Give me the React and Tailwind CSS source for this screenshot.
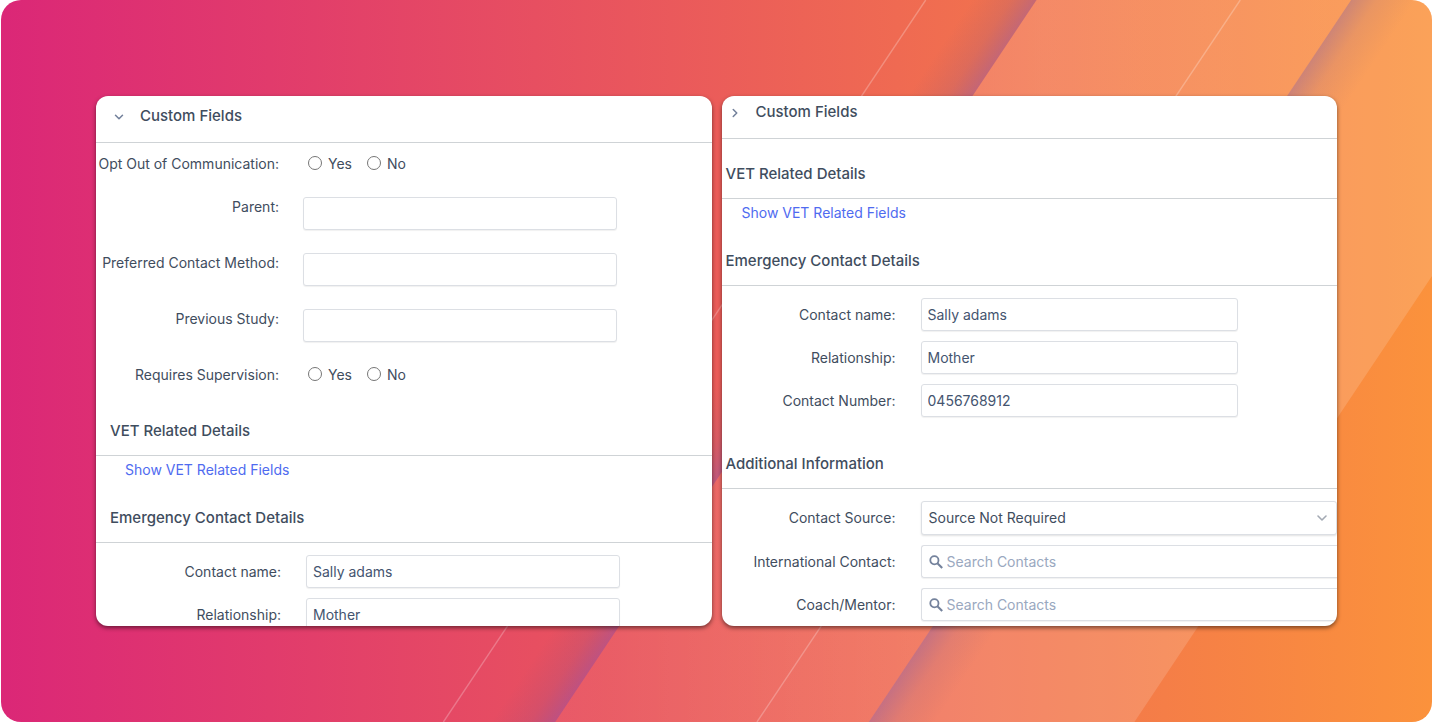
import { ChevronDown, ChevronRight } from "lucide-react";

function Backdrop() {
  return (
    <svg
      className="absolute inset-0 w-full h-full"
      viewBox="0 0 1433 722"
      preserveAspectRatio="none"
      aria-hidden="true"
    >
      <defs>
        <linearGradient id="band" gradientUnits="userSpaceOnUse" x1="600" y1="0" x2="1040" y2="0">
          <stop offset="0" stopColor="#fff" stopOpacity="0.05" />
          <stop offset="1" stopColor="#fff" stopOpacity="0.15" />
        </linearGradient>
        <linearGradient id="shadeLeft" gradientUnits="userSpaceOnUse" x1="1037" y1="0" x2="992" y2="-30">
          <stop offset="0" stopColor="#6750c8" stopOpacity="0.33" />
          <stop offset="0.4" stopColor="#6750a0" stopOpacity="0.14" />
          <stop offset="1" stopColor="#675080" stopOpacity="0" />
        </linearGradient>
        <linearGradient id="shadeRight" gradientUnits="userSpaceOnUse" x1="1352" y1="0" x2="1397" y2="30">
          <stop offset="0" stopColor="#6750b4" stopOpacity="0.3" />
          <stop offset="0.4" stopColor="#6750a0" stopOpacity="0.11" />
          <stop offset="1" stopColor="#675080" stopOpacity="0" />
        </linearGradient>
      </defs>
      <polygon points="1352,0 1433,0 1433,276 1135,722 869,722" fill="#fff" fillOpacity="0.15" />
      <polygon points="1352,0 1433,0 936,722 869,722" fill="url(#shadeRight)" />
      <polygon points="1037,0 965,0 482,722 555,722" fill="url(#shadeLeft)" />
      <polygon points="1037,0 1352,0 869,722 555,722" fill="url(#band)" />
      <g stroke="#fff" strokeOpacity="0.25" strokeWidth="1.4">
        <line x1="926" y1="0" x2="443" y2="722" />
        <line x1="1241" y1="0" x2="757" y2="722" />
      </g>
    </svg>
  );
}

function Card({ children }) {
  return (
    <section className="flex-1 min-w-0 overflow-hidden rounded-xl bg-white shadow-[0_2px_4px_rgba(0,0,0,0.5)]">
      {children}
    </section>
  );
}

function SectionTitle({ children, className }) {
  return (
    <h2 className={`border-b border-[#cfd3d6] pb-[14px] text-[15px] leading-5 font-medium ${className}`}>
      {children}
    </h2>
  );
}

function VetLink({ className }) {
  return (
    <div className={`pt-1 text-sm leading-5 ${className}`}>
      <a href="#vet" className="text-[#4f6bf0]">
        Show VET Related Fields
      </a>
    </div>
  );
}

const inputClass =
  "h-[33px] rounded-[3px] border border-[#dcdfe4] bg-white px-1.5 text-sm text-[#44546f] shadow-[0_1px_1px_rgba(0,0,0,0.06)] outline-none";

function RadioRow({ name, label }) {
  return (
    <div role="radiogroup" aria-labelledby={name} className="flex items-center text-sm leading-5">
      <span id={name} className="w-[183px] shrink-0 text-right">
        {label}
      </span>
      <div className="ml-[29px] flex gap-[15px]">
        {["Yes", "No"].map((option) => (
          <label key={option} className="flex items-center gap-1.5">
            <input type="radio" name={name} className="h-[14px] w-[14px] mb-[3px]" />
            {option}
          </label>
        ))}
      </div>
    </div>
  );
}

function BlankRow({ id, label }) {
  return (
    <div className="flex items-start">
      <label htmlFor={id} className="w-[183px] shrink-0 text-right text-sm leading-5">
        {label}
      </label>
      <input id={id} type="text" className={`ml-6 w-[314px] ${inputClass}`} />
    </div>
  );
}

function ContactRow({ id, label, value, labelWidth, inputWidth }) {
  return (
    <div className="flex items-center">
      <label htmlFor={id} className={`shrink-0 text-right text-sm leading-5 ${labelWidth}`}>
        {label}
      </label>
      <input id={id} type="text" defaultValue={value} className={`ml-[25px] ${inputWidth} ${inputClass}`} />
    </div>
  );
}

function SearchRow({ id, label }) {
  return (
    <div className="flex items-center">
      <label htmlFor={id} className="w-[174px] shrink-0 text-right text-sm leading-5">
        {label}
      </label>
      <div className="ml-[25px] flex h-[33px] flex-1 items-center gap-1 rounded-l-[3px] border border-r-0 border-[#dcdfe4] pl-[7px] shadow-[0_1px_1px_rgba(0,0,0,0.06)]">
        <svg width="14" height="14" viewBox="0 0 14 14" fill="none" stroke="#74829c" strokeWidth="1.8" aria-hidden="true">
          <circle cx="5.4" cy="5.2" r="4.1" />
          <path d="M8.4 8.2L13.2 13" strokeWidth="2.1" />
        </svg>
        <input
          id={id}
          type="text"
          placeholder="Search Contacts"
          className="min-w-0 flex-1 text-sm outline-none placeholder:text-[#9aa8c0]"
        />
      </div>
    </div>
  );
}

export default function App() {
  return (
    <main className="flex h-screen flex-col bg-white px-px font-['Inter',sans-serif] text-[#3f4d5e]">
      <div className="relative flex min-h-0 flex-1 overflow-hidden rounded-[20px] bg-linear-to-r/srgb from-[#db2777] to-[#fb923c] px-[95px] py-24">
        <Backdrop />
        <div className="relative flex min-w-0 flex-1 gap-[10px]">
          {/* Expanded */}
          <Card>
            <h2 className="border-b border-[#cfd3d6] pt-[10px] pb-4 pl-4 text-[15px] leading-5 font-medium">
              <button type="button" aria-expanded="true" className="flex items-center gap-[14px]">
                <ChevronDown size={14} strokeWidth={2.6} className="mt-0.5 text-[#74829c]" />
                Custom Fields
              </button>
            </h2>
            <div className="flex flex-col gap-[23px] pt-[11px]">
              <RadioRow name="opt-out" label="Opt Out of Communication:" />
              <BlankRow id="parent" label="Parent:" />
              <BlankRow id="method" label="Preferred Contact Method:" />
              <BlankRow id="study" label="Previous Study:" />
              <RadioRow name="supervision" label="Requires Supervision:" />
            </div>
            <SectionTitle className="pt-9 pl-[14px]">VET Related Details</SectionTitle>
            <VetLink className="pl-[29px]" />
            <SectionTitle className="pt-7 pl-[14px]">Emergency Contact Details</SectionTitle>
            <div className="flex flex-col gap-[10px] pt-3">
              <ContactRow id="name-a" label="Contact name:" value="Sally adams" labelWidth="w-[185px]" inputWidth="w-[314px]" />
              <ContactRow id="relation-a" label="Relationship:" value="Mother" labelWidth="w-[185px]" inputWidth="w-[314px]" />
            </div>
          </Card>

          {/* Collapsed */}
          <Card>
            <h2 className="border-b border-[#cfd3d6] pt-[6px] pb-4 pl-[6px] text-[15px] leading-5 font-medium">
              <button type="button" aria-expanded="false" className="flex items-center gap-[14px]">
                <ChevronRight size={14} strokeWidth={2.6} className="mt-0.5 text-[#74829c]" />
                Custom Fields
              </button>
            </h2>
            <SectionTitle className="pt-[25px] pl-1">VET Related Details</SectionTitle>
            <VetLink className="pl-5" />
            <SectionTitle className="pt-7 pl-1">Emergency Contact Details</SectionTitle>
            <div className="flex flex-col gap-[10px] pt-3">
              <ContactRow id="name-b" label="Contact name:" value="Sally adams" labelWidth="w-[174px]" inputWidth="w-[317px]" />
              <ContactRow id="relation-b" label="Relationship:" value="Mother" labelWidth="w-[174px]" inputWidth="w-[317px]" />
              <ContactRow id="number-b" label="Contact Number:" value="0456768912" labelWidth="w-[174px]" inputWidth="w-[317px]" />
            </div>
            <SectionTitle className="pt-[37px] pl-1">Additional Information</SectionTitle>
            <div className="flex flex-col gap-[10px] pt-3">
              <div className="flex items-center">
                <label htmlFor="source" className="w-[174px] shrink-0 text-right text-sm leading-5">
                  Contact Source:
                </label>
                <div className="relative ml-[25px] flex flex-1">
                  <select
                    id="source"
                    className="h-[34px] flex-1 appearance-none rounded-[3px] border border-[#dcdfe4] bg-white px-[7px] text-sm shadow-[0_1px_2px_rgba(0,0,0,0.12)] outline-none"
                  >
                    <option>Source Not Required</option>
                  </select>
                  <ChevronDown
                    size={16}
                    strokeWidth={2.4}
                    className="pointer-events-none absolute top-[9px] right-[7px] text-[#a3a9b3]"
                  />
                </div>
              </div>
              <SearchRow id="international" label="International Contact:" />
              <SearchRow id="coach" label="Coach/Mentor:" />
            </div>
          </Card>
        </div>
      </div>
    </main>
  );
}
